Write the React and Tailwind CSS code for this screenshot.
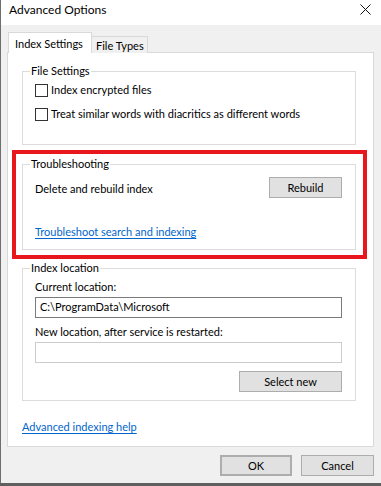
import React from 'react';

const Checkbox = ({ label }) => (
  <label className="flex items-center h-[14px]">
    <span className="w-[13px] h-[13px] border border-[#333333] bg-white" />
    <span className="ml-[3px]">{label}</span>
  </label>
);

const Group = ({ title, className = '', children }) => (
  <fieldset className={`border border-[#dcdcdc] mx-0 ${className}`}>
    <legend className="ml-[7px] px-[1px] leading-[16px]">{title}</legend>
    {children}
  </fieldset>
);

const Button = ({ children, className = '' }) => (
  <button className={`h-[21px] bg-[#e1e1e1] border border-[#adadad] text-black leading-none ${className}`}>
    {children}
  </button>
);

export default function App() {
  return (
    <div className="relative w-[381px] h-[486px] bg-[#5f5f5f] overflow-hidden font-['Lato',sans-serif] text-[11px] text-black">
      <div className="flex flex-col w-[381px] h-[483px] border-l border-[#6e6e6e]">
        {/* Title bar */}
        <div className="flex items-center justify-between h-[25px] bg-white pl-[8px] pr-[10px] pb-[5px]">
          <span className="text-[12px]">Advanced Options</span>
          <svg width="11" height="11" viewBox="0 0 11 11" className="-mt-[1px]">
            <path d="M0.5 0.5L10.5 10.5M10.5 0.5L0.5 10.5" stroke="#111" strokeWidth="1" />
          </svg>
        </div>

        {/* Dialog body */}
        <div className="flex-1 flex flex-col bg-[#f0f0f0] pl-[6px] pr-[7px] pt-[7px]">
          {/* Tabs */}
          <div className="flex items-end h-[21px] relative z-10 ml-[1px] whitespace-nowrap">
            <div className="h-[21px] w-[84px] bg-white border border-b-0 border-[#d9d9d9] flex items-start pt-[3px] pl-[6px]">
              Index Settings
            </div>
            <div className="h-[17px] w-[56px] bg-[#f0f0f0] border border-l-0 border-b-0 border-[#d9d9d9] flex items-start pt-[1px] pl-[4px]">
              File Types
            </div>
          </div>

          {/* Panel */}
          <div className="-mt-[1px] h-[395px] bg-white border border-[#d9d9d9] flex flex-col pl-[14px] pr-[17px]">
            <Group title="File Settings" className="mt-[10px] h-[82px]">
              <div className="flex flex-col gap-[10px] pl-[12px] pt-[4px]">
                <Checkbox label="Index encrypted files" />
                <Checkbox label="Treat similar words with diacritics as different words" />
              </div>
            </Group>

            <Group title="Troubleshooting" className="mt-[11px] h-[94px]">
              <div className="flex items-center justify-between pl-[12px] pr-[13px] pt-[5px]">
                <span className="mt-[3px]">Delete and rebuild index</span>
                <Button className="w-[73px]">Rebuild</Button>
              </div>
              <a href="#" className="block ml-[12px] mt-[26px] w-fit text-[#0066cc] underline underline-offset-[2px]">
                Troubleshoot search and indexing
              </a>
            </Group>

            <Group title="Index location" className="mt-[10px] h-[141px]">
              <div className="flex flex-col pl-[12px] pr-[13px]">
                <span className="leading-[16px] mt-[3px]">Current location:</span>
                <div className="mt-[2px] h-[21px] border border-[#7a7a7a] flex items-center px-[4px]">
                  C:\ProgramData\Microsoft
                </div>
                <span className="leading-[16px] mt-[6px]">New location, after service is restarted:</span>
                <div className="mt-[2px] h-[21px] border border-[#cccccc]" />
                <div className="flex justify-end mt-[8px]">
                  <Button className="w-[103px]">Select new</Button>
                </div>
              </div>
            </Group>

            <a href="#" className="mt-[18px] w-fit text-[#0066cc] underline underline-offset-[2px] leading-[16px]">
              Advanced indexing help
            </a>
          </div>

          {/* Footer buttons */}
          <div className="flex justify-end gap-[9px] mt-[8px]">
            <Button className="w-[72px] border-2 border-[#0078d7]">OK</Button>
            <Button className="w-[73px]">Cancel</Button>
          </div>
        </div>
      </div>

      {/* Red annotation highlight */}
      <div className="absolute left-[12px] top-[150px] w-[355px] h-[109px] border-4 border-[#e8161d] pointer-events-none" />
    </div>
  );
}
